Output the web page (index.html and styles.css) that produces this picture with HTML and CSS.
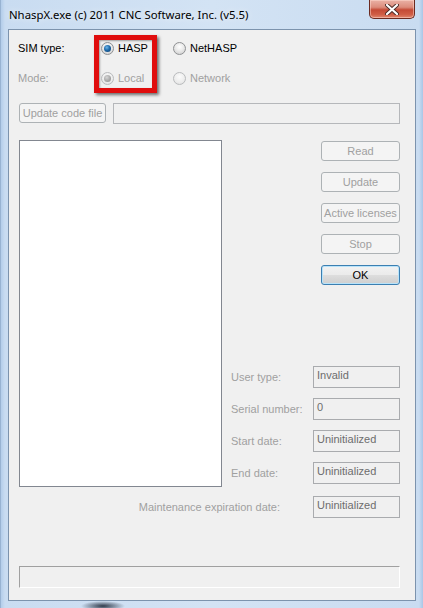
FILE: index.html
```html
<!DOCTYPE html>
<html lang="en">
<head>
    <meta charset="UTF-8">
    <meta name="viewport" content="width=device-width, initial-scale=1.0">
    <title>NhaspX</title>
    <link rel="stylesheet" href="styles.css">
</head>
<body>
   <div class="window">
    <div class="titlebar">
        <span class="title">NhaspX.exe (c) 2011 CNC Software, Inc. (v5.5)</span>
        <span class="close">
            <svg width="14" height="11" viewBox="0 0 14 11">
                <path d="M2 1 L12 10 M12 1 L2 10" stroke="#4a2a26" stroke-width="4" stroke-linecap="round"/>
                <path d="M2 1 L12 10 M12 1 L2 10" stroke="#fff" stroke-width="2.2" stroke-linecap="round"/>
            </svg>
        </span>
    </div>
    <div class="client">
        <div class="options">
            <span class="label">SIM type:</span>
            <label class="radio checked"><i></i>HASP</label>
            <label class="radio"><i></i>NetHASP</label>
            <span class="label disabled">Mode:</span>
            <label class="radio checked disabled"><i></i>Local</label>
            <label class="radio disabled"><i></i>Network</label>
            <span class="highlight"></span>
        </div>

        <div class="update-row">
            <button class="btn">Update code file</button>
            <div class="field wide"></div>
        </div>

        <div class="main">
            <div class="list"></div>
            <div class="side">
                <div class="buttons">
                    <button class="btn">Read</button>
                    <button class="btn">Update</button>
                    <button class="btn">Active licenses</button>
                    <button class="btn">Stop</button>
                    <button class="btn default">OK</button>
                </div>
                <div class="info">
                    <div class="info-row">
                        <span class="label disabled">User type:</span>
                        <div class="field">Invalid</div>
                    </div>
                    <div class="info-row">
                        <span class="label disabled">Serial number:</span>
                        <div class="field">0</div>
                    </div>
                    <div class="info-row">
                        <span class="label disabled">Start date:</span>
                        <div class="field">Uninitialized</div>
                    </div>
                    <div class="info-row">
                        <span class="label disabled">End date:</span>
                        <div class="field">Uninitialized</div>
                    </div>
                </div>
            </div>
        </div>

        <div class="info-row maint">
            <span class="label disabled">Maintenance expiration date:</span>
            <div class="field">Uninitialized</div>
        </div>

        <div class="progress"></div>
    </div>
   </div>
</body>
</html>
```

FILE: styles.css
```css
* {
    margin: 0;
    padding: 0;
    box-sizing: border-box;
}

body {
    width: 423px;
    height: 608px;
    overflow: hidden;
    background: #c5daf0;
    font-family: 'Liberation Sans', Arial, sans-serif;
    font-size: 11px;
    color: #000;
}

.window {
    position: relative;
    width: 423px;
    height: 608px;
    display: flex;
    flex-direction: column;
    padding: 0 7px 7px 7px;
    background:
        radial-gradient(ellipse 22px 5px at 102px 606px, rgba(20, 30, 45, 0.85), rgba(20, 30, 45, 0) 100%),
        linear-gradient(90deg, #b3cdea 0px, #c9dcf1 4px, #d3e3f4 50%, #c9dcf1 calc(100% - 4px), #a9c6e6 100%);
    border-left: 1px solid #98b3d2;
}

.titlebar {
    height: 29px;
    display: flex;
    align-items: flex-start;
    flex-shrink: 0;
}

.title {
    padding: 7px 0 0 1px;
    font-family: 'Noto Sans', sans-serif;
    font-size: 11.35px;
    color: #000;
    text-shadow: 0 0 6px rgba(255, 255, 255, 0.9);
    white-space: nowrap;
}

.close {
    margin-left: auto;
    margin-right: 1px;
    width: 46px;
    height: 19px;
    display: flex;
    align-items: center;
    justify-content: center;
    border: 1px solid #6b2a20;
    border-top: none;
    border-radius: 0 0 5px 5px;
    background: linear-gradient(#eab2a6 0%, #dc8c7c 40%, #c44a36 55%, #cf5d45 80%, #e0866e 100%);
    box-shadow: inset 0 0 0 1px rgba(255, 220, 210, 0.5);
}

.client {
    flex: 1;
    display: flex;
    flex-direction: column;
    padding: 10px 15px 12px 10px;
    background: #f0f0f0;
    border: 1px solid #7c93ad;
}

.label {
    white-space: nowrap;
}

.disabled {
    color: #a0a0a0;
}

.options {
    position: relative;
    display: grid;
    grid-template-columns: 82px 72px auto;
    grid-auto-rows: 16px;
    row-gap: 14px;
    align-items: center;
}

.options > .label {
    margin-left: -1px;
}

.radio {
    display: flex;
    align-items: center;
    gap: 4px;
}

.radio i {
    position: relative;
    width: 13px;
    height: 13px;
    border-radius: 50%;
    border: 1px solid #8f9193;
    background: radial-gradient(circle at 50% 35%, #ffffff 0%, #eaeaea 45%, #c9c9c9 100%);
}

.radio.checked i::after {
    content: '';
    position: absolute;
    left: 2px;
    top: 2px;
    width: 7px;
    height: 7px;
    border-radius: 50%;
    background: radial-gradient(circle at 40% 35%, #6fb6e8 0%, #1f6bab 45%, #0c3866 100%);
}

.radio.disabled i {
    border-color: #b9bbbd;
    background: radial-gradient(circle at 50% 35%, #fbfbfb 0%, #ececec 60%, #dcdcdc 100%);
}

.radio.checked.disabled i::after {
    background: radial-gradient(circle at 40% 35%, #d6d6d6 0%, #a4a4a4 60%, #8a8a8a 100%);
}

.highlight {
    position: absolute;
    left: 75px;
    top: -5px;
    width: 63px;
    height: 58px;
    border: 5px solid #e00d0d;
    box-shadow: 2px 2px 3px rgba(0, 0, 0, 0.55), inset 1px 1px 2px rgba(0, 0, 0, 0.35);
}

.btn {
    height: 20px;
    padding: 0;
    border: 1px solid #adb2b5;
    border-radius: 3px;
    background: #f4f4f4;
    color: #a0a0a0;
    font-family: 'Liberation Sans', Arial, sans-serif;
    font-size: 11px;
    white-space: nowrap;
}

.btn.default {
    border-color: #3c7fb1;
    color: #000;
    background: linear-gradient(#f2f2f2 0%, #ebebeb 48%, #dddddd 52%, #cfcfcf 100%);
    box-shadow: inset 0 0 0 1px #b8e3fa;
}

.update-row {
    display: flex;
    gap: 7px;
    margin-top: 17px;
}

.update-row .btn {
    width: 87px;
}

.field {
    height: 22px;
    width: 87px;
    padding: 2px 0 0 3px;
    border: 1px solid #a9abae;
    background: #f0f0f0;
    color: #6d6d6d;
    white-space: nowrap;
}

.field.wide {
    flex: 1;
    height: 21px;
    border-color: #b5b7ba;
}

.main {
    display: grid;
    grid-template-columns: 203px 1fr;
    margin-top: 16px;
    height: 347px;
}

.list {
    background: #fff;
    border: 1px solid #828790;
}

.side {
    display: flex;
    flex-direction: column;
    justify-content: space-between;
    padding: 1px 0 3px 9px;
}

.buttons {
    display: flex;
    flex-direction: column;
    align-items: flex-end;
    gap: 11px;
}

.buttons .btn {
    width: 79px;
}

.info {
    display: flex;
    flex-direction: column;
    gap: 10px;
}

.info-row {
    display: flex;
    align-items: center;
    justify-content: space-between;
}

.maint {
    justify-content: flex-end;
    gap: 33px;
    margin-top: 9px;
}

.progress {
    margin-top: auto;
    height: 22px;
    border: 1px solid;
    border-color: #a0a0a0 #ffffff #ffffff #a0a0a0;
    background: #f0f0f0;
}
```
